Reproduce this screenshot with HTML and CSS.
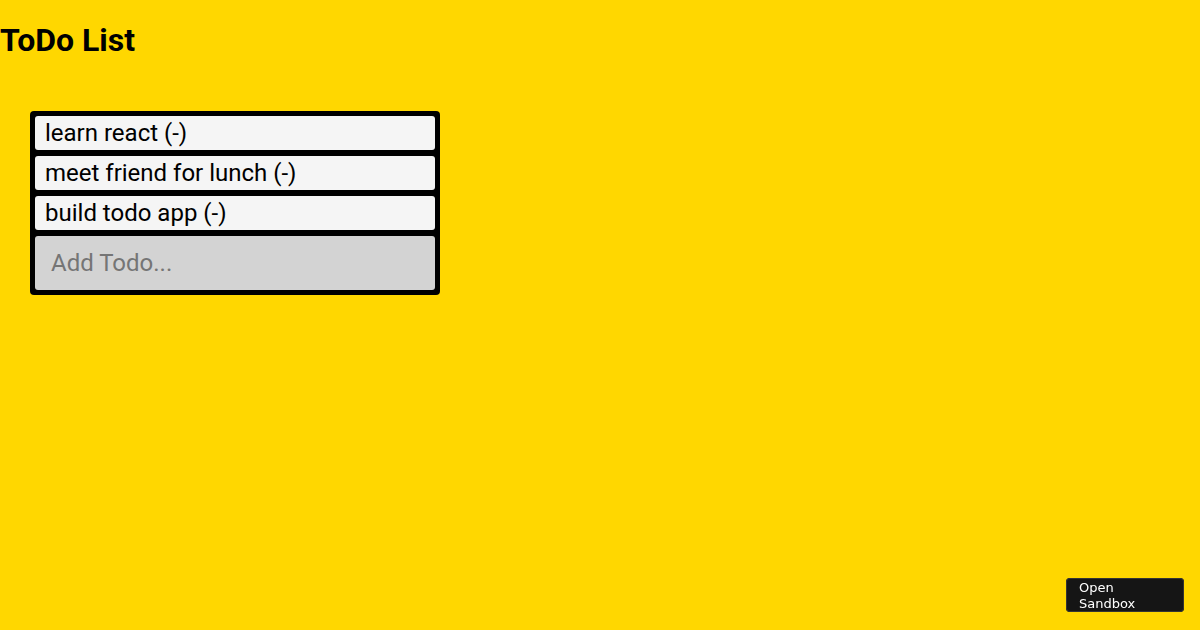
FILE: index.html
```
<!DOCTYPE html>
<html lang="en">
  <head>
    <meta charset="utf-8"/>
    <title>ToDo List</title>
    <meta name="viewport" content="width=device-width, initial-scale=1.0"/>
    <link rel="stylesheet" href="styles.css">
  </head>
  <body>
    <h1>ToDo List</h1>
    <div class="todo-list">
      <div class="todo">learn react (-)</div>
      <div class="todo">meet friend for lunch (-)</div>
      <div class="todo">build todo app (-)</div>
      <form id="todo-form">
        <input class="input" type="text" placeholder="Add Todo..." aria-label="Add Todo"/>
      </form>
    </div>
    <button class="open-sandbox" type="button">Open Sandbox</button>
    <script>
      var list = document.querySelector(".todo-list");

      var form = document.getElementById("todo-form");

      var input = form.querySelector(".input");

      form.addEventListener("submit", function (event) {
        event.preventDefault();
        if (!input.value) { return }
        var todo = document.createElement("div");
        todo.className = "todo";
        todo.textContent = input.value + " (-)";
        list.insertBefore(todo, form);
        input.value = "";
      });

      list.addEventListener("click", function (event) {
        if (event.target.className === "todo") {
          event.target.remove();
        }
      });
    </script>
  </body>
</html>
```
FILE: styles.css
```
body {
  margin: 0;
  background-color: gold;
  font-family: Roboto, sans-serif;
}
h1 {
  margin: 21px 0;
  font-size: 32px;
  line-height: 38px;
}
.todo-list {
  box-sizing: border-box;
  max-width: 410px;
  margin: 52px 30px 30px;
  border-radius: 4px;
  padding: 5px;
  background-color: #000;
}
.todo {
  margin-bottom: 6px;
  border-radius: 3px;
  padding: 3px 10px;
  background-color: whitesmoke;
  font-size: 24px;
  line-height: 28px;
  cursor: pointer;
}
.input {
  display: block;
  box-sizing: border-box;
  width: 100%;
  border: none;
  border-radius: 3px;
  padding: 13px 16px;
  background-color: lightgray;
  font-family: inherit;
  font-size: 24px;
  line-height: 28px;
}
.open-sandbox {
  position: fixed;
  right: 16px;
  bottom: 18px;
  box-sizing: border-box;
  width: 118px;
  border: none;
  border-radius: 4px;
  padding: 2px 13px 0;
  background-color: #151515;
  box-shadow: inset 0 0 0 1px #343434;
  color: #fff;
  font-family: "DejaVu Sans", sans-serif;
  font-size: 13px;
  line-height: 16px;
  text-align: left;
}
```
